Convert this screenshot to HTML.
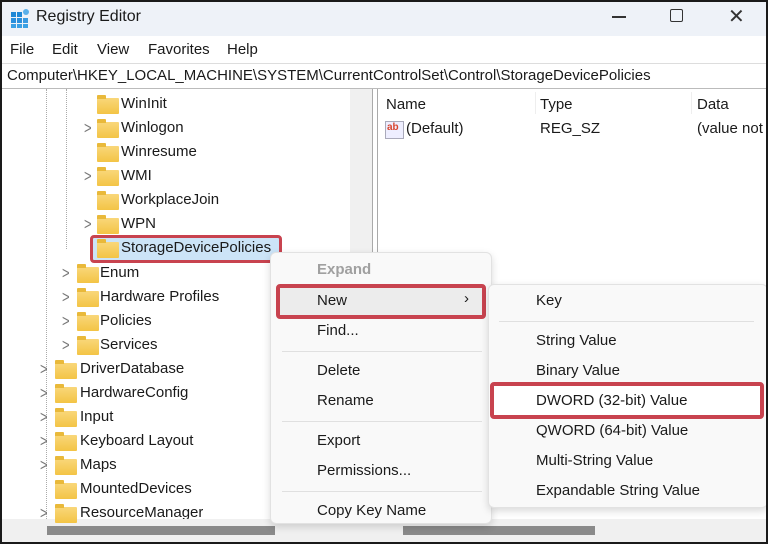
<!DOCTYPE html><html><head><style>
*{margin:0;padding:0;box-sizing:border-box}
body{width:768px;height:544px;overflow:hidden;background:#1a1a1a;font-family:"Liberation Sans",sans-serif;color:#1a1a1a;position:relative}
#win{position:absolute;left:2px;top:2px;width:764px;height:540px;background:#fff;overflow:hidden}
.a{position:absolute;white-space:nowrap}
.t{font-size:15px}
.fold{position:absolute;width:22px;height:16px;background:linear-gradient(#f9d77a,#f3c445);border-radius:1px}
.fold:before{content:"";position:absolute;left:0;top:-3px;width:9px;height:4px;background:#e9b93a;border-radius:1px 1px 0 0}
.chev{position:absolute;font-size:13px;color:#777;transform:scaleY(1.3)}
.mi{position:absolute;font-size:15px;color:#1a1a1a}
.sep{position:absolute;height:1px;background:#e0e0e0}
</style></head><body><div id="win">
<div class="a" style="left:0;top:0;width:764px;height:34px;background:#eef2f8"></div>
<svg class="a" style="left:9px;top:6px" width="20" height="20"><rect x="0" y="4" width="5" height="5" fill="#1e88d6"/><rect x="6" y="4" width="5" height="5" fill="#1e88d6"/><rect x="0" y="10" width="5" height="5" fill="#2a8fdc"/><rect x="6" y="10" width="5" height="5" fill="#2a8fdc"/><rect x="12" y="10" width="5" height="5" fill="#3a9ae0"/><rect x="0" y="16" width="5" height="4" fill="#3aa0e4"/><rect x="6" y="16" width="5" height="4" fill="#3aa0e4"/><rect x="12" y="16" width="5" height="4" fill="#3aa0e4"/><circle cx="15" cy="4" r="3" fill="#5ab0ea"/></svg>
<div class="a t" style="left:34px;top:6px;font-size:16px">Registry Editor</div>
<div class="a" style="left:610px;top:14px;width:14px;height:1.5px;background:#333"></div>
<div class="a" style="left:668px;top:7px;width:13px;height:13px;border:1.5px solid #333;border-radius:2px"></div>
<div class="a" style="left:726px;top:2px;font-size:20px;color:#333">✕</div>
<div class="a t" style="left:8px;top:39px">File</div>
<div class="a t" style="left:50px;top:39px">Edit</div>
<div class="a t" style="left:95px;top:39px">View</div>
<div class="a t" style="left:146px;top:39px">Favorites</div>
<div class="a t" style="left:225px;top:39px">Help</div>
<div class="a" style="left:0;top:61px;width:764px;height:1px;background:#ddd"></div>
<div class="a t" style="left:5px;top:65px">Computer\HKEY_LOCAL_MACHINE\SYSTEM\CurrentControlSet\Control\StorageDevicePolicies</div>
<div class="a" style="left:0;top:86px;width:764px;height:1px;background:#bbb"></div>
<div class="a" style="left:348px;top:87px;width:22px;height:430px;background:#f0f0f0"></div>
<div class="a" style="left:370px;top:87px;width:1px;height:455px;background:#aaa"></div>
<div class="a" style="left:375px;top:87px;width:1px;height:455px;background:#aaa"></div>
<div class="a" style="left:0;top:517px;width:764px;height:23px;background:#f0f0f0"></div>
<div class="a" style="left:45px;top:524px;width:228px;height:9px;background:#8a8a8a"></div>
<div class="a" style="left:401px;top:524px;width:192px;height:9px;background:#8a8a8a"></div>
<div class="a" style="left:44px;top:87px;width:0;height:430px;border-left:1px dotted #aaa"></div>
<div class="a" style="left:64px;top:87px;width:0;height:160px;border-left:1px dotted #aaa"></div>
<!-- tree rows -->
<div class="fold" style="left:95px;top:96px"></div><div class="a t" style="left:119px;top:93px">WinInit</div>
<div class="chev" style="left:82px;top:118px">&gt;</div><div class="fold" style="left:95px;top:120px"></div><div class="a t" style="left:119px;top:117px">Winlogon</div>
<div class="fold" style="left:95px;top:144px"></div><div class="a t" style="left:119px;top:141px">Winresume</div>
<div class="chev" style="left:82px;top:166px">&gt;</div><div class="fold" style="left:95px;top:168px"></div><div class="a t" style="left:119px;top:165px">WMI</div>
<div class="fold" style="left:95px;top:192px"></div><div class="a t" style="left:119px;top:189px">WorkplaceJoin</div>
<div class="chev" style="left:82px;top:214px">&gt;</div><div class="fold" style="left:95px;top:216px"></div><div class="a t" style="left:119px;top:213px">WPN</div>
<div class="a" style="left:88px;top:233px;width:192px;height:28px;border:3.5px solid #c8434f;border-radius:4px;background:#cce4f7"></div>
<div class="fold" style="left:95px;top:240px"></div><div class="a t" style="left:119px;top:237px">StorageDevicePolicies</div>
<div class="chev" style="left:60px;top:263px">&gt;</div><div class="fold" style="left:75px;top:265px"></div><div class="a t" style="left:98px;top:262px">Enum</div>
<div class="chev" style="left:60px;top:287px">&gt;</div><div class="fold" style="left:75px;top:289px"></div><div class="a t" style="left:98px;top:286px">Hardware Profiles</div>
<div class="chev" style="left:60px;top:311px">&gt;</div><div class="fold" style="left:75px;top:313px"></div><div class="a t" style="left:98px;top:310px">Policies</div>
<div class="chev" style="left:60px;top:335px">&gt;</div><div class="fold" style="left:75px;top:337px"></div><div class="a t" style="left:98px;top:334px">Services</div>
<div class="chev" style="left:38px;top:359px">&gt;</div><div class="fold" style="left:53px;top:361px"></div><div class="a t" style="left:78px;top:358px">DriverDatabase</div>
<div class="chev" style="left:38px;top:383px">&gt;</div><div class="fold" style="left:53px;top:385px"></div><div class="a t" style="left:78px;top:382px">HardwareConfig</div>
<div class="chev" style="left:38px;top:407px">&gt;</div><div class="fold" style="left:53px;top:409px"></div><div class="a t" style="left:78px;top:406px">Input</div>
<div class="chev" style="left:38px;top:431px">&gt;</div><div class="fold" style="left:53px;top:433px"></div><div class="a t" style="left:78px;top:430px">Keyboard Layout</div>
<div class="chev" style="left:38px;top:455px">&gt;</div><div class="fold" style="left:53px;top:457px"></div><div class="a t" style="left:78px;top:454px">Maps</div>
<div class="fold" style="left:53px;top:481px"></div><div class="a t" style="left:78px;top:478px">MountedDevices</div>
<div class="chev" style="left:38px;top:503px">&gt;</div><div class="fold" style="left:53px;top:505px"></div><div class="a t" style="left:78px;top:502px;height:15px;overflow:hidden">ResourceManager</div>
<!-- right pane -->
<div class="a t" style="left:384px;top:94px">Name</div>
<div class="a" style="left:533px;top:90px;width:1px;height:22px;background:#eee"></div>
<div class="a t" style="left:538px;top:94px">Type</div>
<div class="a" style="left:689px;top:90px;width:1px;height:22px;background:#eee"></div>
<div class="a t" style="left:695px;top:94px">Data</div>
<div class="a" style="left:383px;top:119px;width:19px;height:18px;background:#eef;border:1px solid #aab;font-size:10px;font-weight:bold;color:#d8452f;line-height:12px;padding-left:1px">ab</div>
<div class="a t" style="left:404px;top:118px">(Default)</div>
<div class="a t" style="left:538px;top:118px">REG_SZ</div>
<div class="a t" style="left:695px;top:118px">(value not</div>
<!-- context menu -->
<div class="a" style="left:268px;top:250px;width:222px;height:272px;background:#f9f9f9;border:1px solid #e2e2e2;border-radius:6px;box-shadow:0 3px 8px rgba(0,0,0,.15)"></div>
<div class="mi" style="left:315px;top:259px;color:#a0a0a0;font-weight:bold">Expand</div>
<div class="a" style="left:274px;top:282px;width:210px;height:35px;border:4px solid #c8434f;border-radius:4px;background:#ececec"></div>
<div class="mi" style="left:315px;top:290px">New</div>
<div class="mi" style="left:462px;top:288px">›</div>
<div class="mi" style="left:315px;top:320px">Find...</div>
<div class="sep" style="left:280px;top:349px;width:200px"></div>
<div class="mi" style="left:315px;top:360px">Delete</div>
<div class="mi" style="left:315px;top:390px">Rename</div>
<div class="sep" style="left:280px;top:419px;width:200px"></div>
<div class="mi" style="left:315px;top:430px">Export</div>
<div class="mi" style="left:315px;top:460px">Permissions...</div>
<div class="sep" style="left:280px;top:489px;width:200px"></div>
<div class="mi" style="left:315px;top:500px">Copy Key Name</div>
<!-- submenu -->
<div class="a" style="left:486px;top:282px;width:280px;height:224px;background:#f9f9f9;border:1px solid #e2e2e2;border-radius:6px;box-shadow:0 3px 8px rgba(0,0,0,.15)"></div>
<div class="mi" style="left:534px;top:290px">Key</div>
<div class="sep" style="left:497px;top:319px;width:255px"></div>
<div class="mi" style="left:534px;top:330px">String Value</div>
<div class="mi" style="left:534px;top:360px">Binary Value</div>
<div class="a" style="left:488px;top:380px;width:274px;height:37px;border:4px solid #c8434f;border-radius:4px;background:#fff"></div>
<div class="mi" style="left:534px;top:390px">DWORD (32-bit) Value</div>
<div class="mi" style="left:534px;top:420px">QWORD (64-bit) Value</div>
<div class="mi" style="left:534px;top:450px">Multi-String Value</div>
<div class="mi" style="left:534px;top:480px">Expandable String Value</div>
</div></body></html>
